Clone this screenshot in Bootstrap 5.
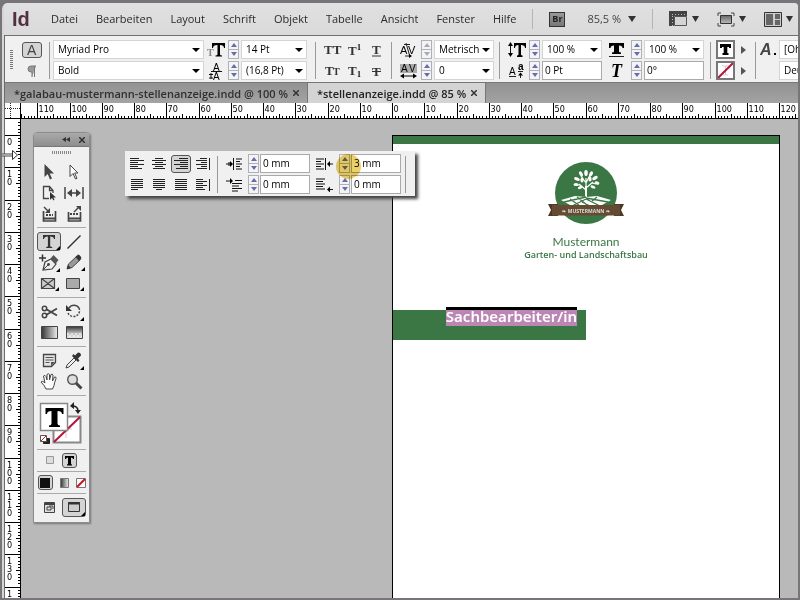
<!DOCTYPE html>
<html lang="de">
<head>
<meta charset="utf-8">
<meta name="viewport" content="width=device-width, initial-scale=1">
<title>stellenanzeige.indd</title>
<link href="https://cdn.jsdelivr.net/npm/bootstrap@5.3.0/dist/css/bootstrap.min.css" rel="stylesheet">
<style>
:root{--ui:"Open Sans","Noto Sans",sans-serif;--field:"Open Sans","Noto Sans",sans-serif}
html,body{height:100%}
body{font-family:var(--ui);font-size:11px;line-height:16px;color:#222;background:#77757a;overflow:hidden;padding:3px 2px 2px 2px}
svg{display:block;flex:none}
button{background:none;border:0;padding:0;color:inherit;display:flex;align-items:center;justify-content:center}
.app{background:#d6d6d6;border-radius:6px 4px 0 0;padding-left:2px;height:100%;overflow:hidden}
.menubar{background:linear-gradient(#e0e0e0,#dadada);height:32px;padding-left:8px;flex:none}
.menubar>*{flex:none}
.brand-id{font:bold 20px/24px "Liberation Sans",sans-serif;color:#52303f;width:39px}
.menubar a{color:#2a2a2a;text-decoration:none;white-space:nowrap}
.menus{gap:18px}
.bridge{width:16px;height:15px;background:linear-gradient(#999,#777);border:1px solid #333;font:bold 9px/12px var(--ui);color:#222}
.vline{width:1px;height:20px;background:#b4b4b4;flex:none;margin:0 16px}
.zoomgroup{margin-left:22px;gap:7px}
.views{gap:18px}
.zoomsel{appearance:none;border:0;background:none;font:11px/16px var(--ui);color:#444;padding:0}
.body-area{border-left:1px solid #6c6c6c;min-height:0}
.desk{min-height:0}
.control{display:grid;grid-auto-flow:column;grid-template-columns:13px 28px 7px 151px 24px 13px 66px 16px 19px 25px 19px 10px 25px 13px 60px 10px 25px 13px 60px 29px 13px 60px 12px 19px 17px 6px 21px 120px;grid-template-rows:21px 21px;align-items:center;background:#f0f0f0;border-top:1px solid #707070;border-bottom:1px solid #777;padding:3px 0 2px;height:48px;overflow:hidden;flex:none}
.control>*{justify-self:center}
.control>.fld,.control>.spin{justify-self:stretch}
.sepbar{grid-row:1/3;width:1px;height:37px;background:#999}
.grip-v{grid-row:1/3;width:3px;height:20px;background:repeating-linear-gradient(#777 0 1px,#f0f0f0 1px 2px)}
.fld{height:19px;border:1px solid #d4d4d4;border-radius:0;background-color:#fff;font:10px/16px var(--field);color:#000;padding:0 0 1px 4px;min-width:0;width:100%;outline:0}
select.fld{appearance:none;background-image:url("data:image/svg+xml,%3Csvg xmlns='http://www.w3.org/2000/svg' width='8' height='4'%3E%3Cpath d='M0 0h8L4 4z'/%3E%3C/svg%3E");background-repeat:no-repeat;background-position:right 3px center}
input.fld{border-color:#aaa;padding-left:2px}
.spin{display:flex;flex-direction:column;height:19px;margin-right:2px;border:1px solid #aeb1b8;background:#f4f4f6;color:#666da8}
.spin button{flex:1}
.spin button+button{border-top:1px solid #aeb1b8}
.spin.off{color:#aaa}
.inkbox{width:19px;height:19px;background:#fff;border:2px solid #777}
.pressed{background:#d4d4d4;border:1px solid #555;border-radius:3px}
.tabs{background:linear-gradient(#929292,#a3a3a3);height:20px;flex:none;font:600 11px/19px var(--ui);color:#303030}
.doc-tab{padding:0 8px 0 9px;gap:5px;white-space:nowrap;border-right:1px solid #777}
.doc-tab.current{background:#d4d4d4;color:#222}
.hruler{height:16px;background:#fff;border-bottom:1px solid #000;flex:none}
.vruler{width:16px;background:#fff;border-right:1px solid #000;flex:none;overflow:hidden}
.rule-text{font:9px "DejaVu Sans Condensed","DejaVu Sans",sans-serif;fill:#000}
.board{background:#b9b9b9;min-width:0;overflow:hidden}
.sheet{position:absolute;left:371px;top:16px;bottom:0;width:388px;background:#fff;border:1px solid #000;border-bottom:0;color:#3a7744}
.topband{height:8px;background:#3a7744}
.company{font:12px/15px Lato,sans-serif}
.trade{font:600 9px/12px "Open Sans",sans-serif}
.jobband{width:50%;height:30px;background:#3a7744;margin-top:49px}
.jobtext{background:#bb85b4;border-top:3px solid #000;color:#fff;font:600 15px/13px "Noto Sans",sans-serif;height:19px;margin:-3px 9px 0 0;white-space:nowrap}
.tools{position:absolute;left:12px;top:13px;width:57px;background:#f0f0f0;border:1px solid #8c8c8c;border-radius:4px 4px 0 0;box-shadow:1px 1px 2px #777;color:#444}
.tools header{height:14px;background:linear-gradient(#aaa,#8e8e8e);border-bottom:1px solid #777;gap:9px;padding-right:4px}
.grip-h{width:20px;height:3px;margin:4px auto 7px;background:repeating-linear-gradient(90deg,#888 0 1px,#f0f0f0 1px 2px)}
.tgrid{display:grid;grid-template-columns:25px 25px;grid-auto-rows:21px;justify-content:center}
.tools hr{margin:3px 3px;border:0;height:1px;background:#aaa;opacity:1}
.tgrid button{justify-self:center}
.tgrid .pressed{width:24px;height:19px;align-self:center}
.tools .mini{width:15px;height:15px}
.inks{height:15px}
.para{position:absolute;left:104px;top:32px;width:290px;height:45px;padding:2px 1px;background:#f0f0f0;box-shadow:3px 3px 3px #444;display:grid;grid-auto-flow:column;grid-template-columns:22px 22px 22px 22px 7px 27px 12px 50px 29px 12px 50px 8px;grid-template-rows:21px 21px;align-items:center}
.para>*{justify-self:center}
.para>.fld,.para>.spin{justify-self:stretch}
.para .spin{margin-right:1px}
.para .pressed{width:20px;height:18px}
.halo{position:absolute;left:315px;top:35px;width:25px;height:25px;border-radius:50%;background:#ecd06a;mix-blend-mode:multiply;pointer-events:none}
.pointer-mark{position:absolute;left:2px;top:149px}
</style>
<script src="https://cdn.jsdelivr.net/npm/bootstrap@5.3.0/dist/js/bootstrap.bundle.min.js"></script>
</head>
<body>
<svg width="0" height="0" class="position-absolute" aria-hidden="true">
<defs>
<symbol id="up" viewBox="0 0 6 4"><path d="M0 4h6L3 0z" fill="currentColor"/></symbol>
<symbol id="dn" viewBox="0 0 6 4"><path d="M0 0h6L3 4z" fill="currentColor"/></symbol>
<symbol id="corner" viewBox="0 0 4 4"><path d="M4 0v4H0z"/></symbol>
<linearGradient id="gr"><stop stop-color="#333"/><stop offset="1" stop-color="#eee"/></linearGradient>
<linearGradient id="gv" x2="0" y2="1"><stop stop-color="#666"/><stop offset="1" stop-color="#bbb"/></linearGradient>
<linearGradient id="gf" x2="0" y2="1"><stop stop-color="#333"/><stop offset=".55" stop-color="#bbb"/><stop offset="1" stop-color="#eee"/></linearGradient>
</defs>
</svg>
<div class="app d-flex flex-column">
<nav class="menubar d-flex align-items-center" aria-label="Hauptmenü">
<div class="brand-id">Id</div>
<div class="menus d-flex">
<a href="#">Datei</a><a href="#">Bearbeiten</a><a href="#">Layout</a><a href="#">Schrift</a><a href="#">Objekt</a><a href="#">Tabelle</a><a href="#">Ansicht</a><a href="#">Fenster</a><a href="#">Hilfe</a>
</div>
<div class="vline"></div>
<button class="bridge" aria-label="Bridge">Br</button>
<div class="zoomgroup d-flex align-items-center"><select class="zoomsel" aria-label="Zoomstufe"><option>85,5 %</option></select><svg width="8" height="6"><path d="M0 0h8L4 6z" fill="#333"/></svg></div>
<div class="vline"></div>
<div class="views d-flex">
<button class="gap-1" aria-label="Anzeigeoptionen"><svg width="19" height="16"><path d="M0 0h18v5H5v10H0z" fill="#444"/><path d="M3 3.500h15M3.500 5v10" stroke="#bbb" stroke-dasharray="1 2"/><path d="M5.500 5.500h12v9h-12z" fill="#d4d4d4" stroke="#555"/></svg><svg width="7" height="6"><path d="M0 0h7L3.500 6z" fill="#333"/></svg></button>
<button class="gap-1" aria-label="Bildschirmmodus"><svg width="18" height="15"><path d="M1 4V1h3M14 1h3v3M17 11v3h-3M4 14H1v-3" fill="none" stroke="#444"/><path d="M3.500 3.500h11v8h-11z" fill="url(#gv)" stroke="#333"/></svg><svg width="7" height="6"><path d="M0 0h7L3.500 6z" fill="#333"/></svg></button>
<button class="gap-1" aria-label="Dokumente anordnen"><svg width="18" height="15"><path d="M.5.5h17v14H.5z" fill="#ccc" stroke="#333"/><path d="M2 2h7v11H2zM11 2h5v5h-5zM11 8h5v5h-5z" fill="#666"/></svg><svg width="7" height="6"><path d="M0 0h7L3.500 6z" fill="#333"/></svg></button>
</div>
</nav>
<div class="body-area d-flex flex-column flex-fill">
<div class="control" id="control"></div>
<div class="tabs d-flex">
<div class="doc-tab d-flex align-items-center"><span>*galabau-mustermann-stellenanzeige.indd @ 100 %</span><button aria-label="Schließen"><svg width="6" height="6"><path d="M0 0l6 6M6 0L0 6" stroke="#333" stroke-width="1.500"/></svg></button></div>
<div class="doc-tab current d-flex align-items-center"><span>*stellenanzeige.indd @ 85 %</span><button aria-label="Schließen"><svg width="6" height="6"><path d="M0 0l6 6M6 0L0 6" stroke="#333" stroke-width="1.500"/></svg></button></div>
</div>
<div class="hruler"><svg id="hr" width="100%" height="15"></svg></div>
<div class="desk d-flex flex-fill position-relative">
<div class="vruler"><svg id="vr" width="15" height="100%"></svg></div>
<main class="board flex-fill position-relative">
<article class="sheet">
<div class="topband"></div>
<div class="text-center">
<svg class="mx-auto mt-3" width="78" height="66" viewBox="547 160 78 66">
<circle cx="586" cy="193" r="31" fill="#3a7744"/>
<g stroke="#fff" fill="none" stroke-width="1.200"><path d="M586 197V178M586 190l-7-6M586 188l7-6M586 183l-5-7M586 183l4-8M580 185l-4 0M592 183l4 1" /><path d="M586 198v-12" stroke-width="2"/></g>
<g fill="#fff"><ellipse cx="586" cy="173" rx="1.800" ry="3"/><ellipse cx="581" cy="174" rx="1.700" ry="2.800" transform="rotate(-30 581 174)"/><ellipse cx="591" cy="174" rx="1.700" ry="2.800" transform="rotate(30 591 174)"/><ellipse cx="577" cy="179" rx="3" ry="1.600" transform="rotate(20 577 179)"/><ellipse cx="595" cy="178" rx="3" ry="1.600" transform="rotate(-30 595 178)"/><ellipse cx="576" cy="184.500" rx="2.500" ry="1.500"/><ellipse cx="597" cy="183" rx="2.500" ry="1.600" transform="rotate(20 597 183)"/><ellipse cx="582" cy="180" rx="1.600" ry="2.500"/><ellipse cx="590" cy="179" rx="1.600" ry="2.500"/><ellipse cx="593" cy="187" rx="2.600" ry="1.500" transform="rotate(25 593 187)"/><ellipse cx="580" cy="187.500" rx="2.500" ry="1.400" transform="rotate(-25 580 187)"/></g>
<path d="M561 200l14-4 11 1 11-1 14 4-9 5h-32z" fill="#fff"/>
<path d="M586 197l-22 5M586 199l-14 7M586 198l22 4M586 199l14 7M577 197l10 8M570 199l10 7M582 202l10 5M597 197l-5 4" stroke="#3a7744" stroke-width="1.300"/>
<path d="M548 204l10 0v12h-10l3-6zM624 204h-10v12h10l-3-6z" fill="#4b3826"/><path d="M552 205h68v10.500h-68z" fill="#654b31"/>
<text x="586" y="212.500" text-anchor="middle" fill="#ddd" font-family="Open Sans, sans-serif" font-size="5" font-weight="bold">❧ MUSTERMANN ❧</text>
</svg>
<div class="company mt-2">Mustermann</div>
<div class="trade">Garten- und Landschaftsbau</div>
</div>
<div class="jobband d-flex justify-content-end align-items-start"><div class="jobtext">Sachbearbeiter/in</div></div>
</article>

<aside class="tools" aria-label="Werkzeuge">
<header class="d-flex align-items-center justify-content-end"><svg width="8" height="5"><path d="M4 0v5L0 2.500zM8 0v5L4 2.500z" fill="#333"/></svg><svg width="6" height="6"><path d="M0 0l6 6M6 0L0 6" stroke="#333" stroke-width="1.500"/></svg></header>
<div class="grip-h"></div>
<div class="tgrid">
<button aria-label="Auswahl"><svg width="12" height="16"><path d="M1.500 0v13l3.200-3 2.300 5.500 2-1-2.300-5H11z" fill="#444"/></svg></button>
<button aria-label="Direktauswahl"><svg width="12" height="16"><path d="M2 1v11.500l3-3 2.500 5.500 1.500-.7-2.400-5.300H10z" fill="#fff" stroke="#444"/></svg></button>
<button aria-label="Seite"><svg width="17" height="16"><path d="M8 13.500H2.500v-12h6l3.500 4V8M8.500 1.500v4H12" fill="none" stroke="#444" stroke-width="1.300"/><path d="M9 7v8l2-2 1.500 2.500 1-.7-1.200-2.300H15z" fill="#333"/></svg></button>
<button aria-label="Lücke"><svg width="20" height="14"><path d="M1 1v12M19 1v12M4 7h12" stroke="#444" stroke-width="1.500"/><path d="M3 7l5-4v8zM17 7l-5-4v8z" fill="#444"/></svg></button>
<button aria-label="Inhaltsaufnahme"><svg width="15" height="16"><path d="M1.500 5v10h12V5" fill="none" stroke="#444" stroke-width="1.700"/><path d="M2 12.500h11" stroke="#444" stroke-width="2"/><path d="M4 9h7" stroke="#444" stroke-width="2" stroke-dasharray="2 1"/><path d="M2 1l4 4" stroke="#444" stroke-width="1.500"/><path d="M8 2v5H3z" fill="#444"/></svg></button>
<button aria-label="Inhaltsplatzierung"><svg width="15" height="16"><path d="M1.500 6v9h12V6" fill="none" stroke="#444" stroke-width="1.700"/><path d="M2 12.500h11" stroke="#444" stroke-width="2"/><path d="M3 8h9" stroke="#444" stroke-width="2" stroke-dasharray="2 1"/><path d="M7 6l5-5" stroke="#444" stroke-width="1.500"/><path d="M9 0h5v5z" fill="#444"/></svg></button>
</div><hr>
<div class="tgrid">
<button class="pressed" aria-label="Text"><svg width="22" height="17"><path d="M5 2h12v4h-1q0-2.500-3.800-2.500v9.500q0 1 2 1v1h-6v-1q1.700 0 1.700-1V3.500Q6 3.500 6 6H5z" fill="#333"/><use href="#corner" x="18" y="13" width="4" height="4"/></svg></button>
<button aria-label="Linie"><svg width="16" height="16"><path d="M1.500 14.500l13-13" stroke="#333" stroke-width="1.400"/></svg></button>
<button aria-label="Zeichenstift"><svg width="22" height="19"><path d="M1 5h7M4.500 1.500v7" stroke="#333" stroke-width="1.500"/><path d="M5 17l2-8 6-3 5 5-4 5z" fill="#eee" stroke="#444" stroke-width="1.200"/><path d="M5 17l5-5" stroke="#444"/><circle cx="10.500" cy="11.500" r="1.400" fill="#444"/><path d="M12.500 5.500l3-3.500 5 5-3 4z" fill="#555"/><use href="#corner" x="18" y="15" width="4" height="4"/></svg></button>
<button aria-label="Buntstift"><svg width="21" height="19"><path d="M3 16l1.500-5L13 3l3.500 3.500L8 14.500z" fill="#999" stroke="#444"/><path d="M3 16l1-4 3 3zM11.500 4L14 1.500q2 0 3.500 3.500L15 8z" fill="#333"/><use href="#corner" x="17" y="14" width="4" height="4"/></svg></button>
<button aria-label="Rechteckrahmen"><svg width="20" height="15"><path d="M2.500 2.500h13v10h-13zl13 10m0-10l-13 10" fill="#ccc" stroke="#444" stroke-width="1.200"/><use href="#corner" x="16" y="11" width="4" height="4"/></svg></button>
<button aria-label="Rechteck"><svg width="20" height="15"><path d="M2.500 2.500h13v10h-13z" fill="#aaa" stroke="#444"/><use href="#corner" x="16" y="11" width="4" height="4"/></svg></button>
</div><hr>
<div class="tgrid">
<button aria-label="Schere"><svg width="17" height="14"><path d="M5 4l11 6.500M5 10l11-6.500" stroke="#444" stroke-width="1.800"/><circle cx="3.500" cy="3.500" r="2.200" fill="none" stroke="#444" stroke-width="1.500"/><circle cx="3.500" cy="10.500" r="2.200" fill="none" stroke="#444" stroke-width="1.500"/></svg></button>
<button aria-label="Frei transformieren"><svg width="20" height="18"><path d="M15 5a6 6 0 1 1-11 5" fill="none" stroke="#444" stroke-width="1.500" stroke-dasharray="2 1.300"/><path d="M2 2v6h6z" fill="#333"/><path d="M5 5a6 6 0 0 1 10 0" fill="none" stroke="#444" stroke-width="1.500"/><use href="#corner" x="16" y="14" width="4" height="4"/></svg></button>
<button aria-label="Verlaufsfarbfeld"><svg width="17" height="13"><path d="M.5.5h16v12H.5z" fill="url(#gr)" stroke="#444"/></svg></button>
<button aria-label="Weiche Verlaufskante"><svg width="17" height="13"><path d="M.5.5h16v12H.5z" fill="url(#gf)" stroke="#444"/><path d="M1 8h15M3 10h13" stroke="#fff" stroke-width="2" stroke-dasharray="2" opacity=".5"/></svg></button>
</div><hr>
<div class="tgrid">
<button aria-label="Notiz"><svg width="15" height="15"><path d="M1.500 1.500h12v8l-4 4h-8z" fill="#e4e4e4" stroke="#444" stroke-width="1.300"/><path d="M3.500 4.500h8M3.500 7h8M3.500 9.500h4" stroke="#555"/><path d="M13 9H9v4z" fill="#555"/></svg></button>
<button aria-label="Pipette"><svg width="20" height="18"><path d="M2 16l1-3 7-7 2 2-7 7z" fill="#eee" stroke="#444"/><path d="M8 4l6 6 1.500-1.500-1.500-2 3-3q0-3-3-3l-3 3L9.500 2z" fill="#333"/><use href="#corner" x="16" y="14" width="4" height="4"/></svg></button>
<button aria-label="Hand"><svg width="19" height="19"><path d="M6 17q-1-3-5-7 1.500-1.800 4 1L3.500 4q1.500-1.500 2.500.5L7 8V2.500q1.500-1.500 2.500 0V8l1.500-5.500q1.500-1 2 .5l-.5 6 2-4q2-.5 1.500 1.500-1.500 4-2 7l-1.500 3.500z" fill="#fff" stroke="#444"/></svg></button>
<button aria-label="Zoom"><svg width="17" height="17"><circle cx="6.500" cy="6.500" r="4.800" fill="#ddd" stroke="#555" stroke-width="1.400"/><path d="M10 10l5.500 5.500" stroke="#444" stroke-width="3"/></svg></button>
</div><hr>
<svg width="54" height="47" role="img" aria-label="Fläche und Kontur"><path d="M19.500 17.500h27v26h-27z" fill="#fff" stroke="#888" stroke-width="2"/><path d="M26 30h12m-6 0v9" stroke="#ccc" fill="none"/><path d="M20 43l26-25" stroke="#b8123a" stroke-width="2"/><path d="M6.500 4.500h27v27h-27z" fill="#fff" stroke="#888" stroke-width="1.500"/><path d="M11.500 9h18v6h-1.500q0-3-4.500-3v12.500q0 2 2.500 2V28h-11v-1.500q2.500 0 2.500-2V12q-4.500 0-4.500 3h-1.500z"/><path d="M38 7q6 0 6 5" fill="none" stroke="#222" stroke-width="1.500"/><path d="M40 3v7l-4-3zM41 11h6l-3 4z" fill="#222"/><path d="M9.500 39.500h6v5h-6z" fill="#222" stroke="#222"/><path d="M6.500 36.500h6v6h-6z" fill="#fff" stroke="#555"/><path d="M7 42l5-5" stroke="#c21"/></svg>
<hr>
<div class="d-flex justify-content-evenly px-1">
<button aria-label="Formatierung auf Container"><svg width="9" height="9"><path d="M.5.5h7v7h-7z" fill="#ddd" stroke="#999"/></svg></button>
<button class="pressed mini" aria-label="Formatierung auf Text"><svg width="11" height="10"><path d="M1 0h9v3H9q0-1.500-2-1.500v6q0 1 1 1V9.500H3V8.500q1 0 1-1v-6Q2 1.500 2 3H1z"/></svg></button>
</div><hr>
<div class="inks d-flex justify-content-around">
<button class="pressed mini" aria-label="Farbe anwenden"><svg width="10" height="10"><path d="M0 0h10v10H0z" fill="#111"/></svg></button>
<button aria-label="Verlauf anwenden"><svg width="9" height="10"><path d="M.5.5h8v9h-8z" fill="url(#gr)" stroke="#777"/></svg></button>
<button aria-label="Keine anwenden"><svg width="10" height="10"><path d="M.5.5h9v9h-9z" fill="#fff" stroke="#777"/><path d="M1 9l8-8" stroke="#d01020" stroke-width="2"/></svg></button>
</div><hr>
<div class="tgrid pb-1">
<button aria-label="Normal"><svg width="11" height="11"><path d="M.5.5h10v10H.5z" fill="#ddd" stroke="#444"/><path d="M1 2h9" stroke="#444" stroke-width="2"/><path d="M3 5h4v3H3zM5 4h4v3" fill="none" stroke="#444"/></svg></button>
<button class="pressed" aria-label="Vorschau"><svg width="22" height="17"><path d="M5.500 3.500h11v9h-11z" fill="#ccc" stroke="#333"/><path d="M5 4.500h12" stroke="#333" stroke-width="2"/><use href="#corner" x="18" y="13" width="4" height="4"/></svg></button>
</div>
</aside>

<section class="para" id="para" aria-label="Absatz"></section>
<div class="halo"></div>
</main>
</div>
</div>
</div>
<svg class="pointer-mark" width="17" height="12"><path d="M0 6h11" stroke="#444" stroke-width="3"/><path d="M0 6h11" stroke="#fff"/><path d="M10.500 1.500l5 4.500-5 4.500z" fill="#fff" stroke="#333"/></svg>
<script>
const spin=(name,off)=>`<div class="spin${off?' off':''}"><button aria-label="${name} erhöhen"><svg width="6" height="4"><use href="#up"/></svg></button><button aria-label="${name} verringern"><svg width="6" height="4"><use href="#dn"/></svg></button></div>`;
const sel=(name,v)=>`<select class="fld" aria-label="${name}"><option>${v}</option></select>`;
const inp=(name,v)=>`<input class="fld" aria-label="${name}" value="${v}">`;
const svg=(w,h,body)=>`<svg width="${w}" height="${h}">${body}</svg>`;
const btn=(name,icon,cls='')=>`<button class="${cls}" aria-label="${name}">${icon}</button>`;
const T=(x,y,s,t,extra='')=>`<text x="${x}" y="${y}" style="font:${s} 'Liberation Serif',serif" ${extra}>${t}</text>`;
const S=(x,y,s,t,extra='')=>`<text x="${x}" y="${y}" style="font:${s} 'Liberation Sans',sans-serif" ${extra}>${t}</text>`;
const sep='<div class="sepbar"></div>';
// column-wise list: each entry is [upper cell, lower cell] or a single full-height cell
const cols=[
 '<div class="grip-v"></div>',
 [btn('Zeichen',svg(18,14,S(4,12,'14px','A','fill="#444"')),'pressed'),btn('Absatz',svg(10,12,'<path d="M9 1H4a3 3 0 0 0 0 6h1v5M7.500 1v11" fill="#999" stroke="#777"/>'))],
 sep,
 [sel('Schriftart','Myriad Pro'),sel('Schriftschnitt','Bold')],
 [svg(18,17,T(0,15,'bold 10px','T','fill="#888"')+'<path d="M5 2h13v5h-1q0-3-4-3v9.500q0 1 2 1V15.500H8.500v-1q2 0 2-1V4Q6 4 6 7H5z"/>'),svg(14,18,S(4,9,'10px','A')+S(4,18,'10px','A')+'<path d="M2 9.500h11M2 11v6M0 12.500h4M0 16h4" stroke="#111"/>')],
 [spin('Schriftgrad'),spin('Zeilenabstand')],
 [sel('Schriftgrad','14 Pt'),sel('Zeilenabstand','(16,8 Pt)')],
 sep,
 [btn('Großbuchstaben',svg(18,14,T(0,11,'bold 13px','TT','fill="#333"'))),btn('Kapitälchen',svg(15,14,T(0,11,'bold 13px','T','fill="#333"')+T(8,11,'bold 10px','T','fill="#333"')))],
 [btn('Hochgestellt',svg(14,14,T(0,12,'bold 13px','T','fill="#333"')+T(9,7,'bold 8px','1'))),btn('Tiefgestellt',svg(14,14,T(0,11,'bold 13px','T','fill="#333"')+T(9,13,'bold 8px','1')))],
 [btn('Unterstrichen',svg(11,14,T(1,11,'bold 13px','T','fill="#333"')+'<path d="M1 13h9" stroke="#333"/>')),btn('Durchgestrichen',svg(11,14,T(1,12,'bold 13px','T','fill="#333"')+'<path d="M1 7.500h9" stroke="#333"/>'))],
 sep,
 [svg(17,16,S(0,12,'11px','A')+S(8,12,'11px','V')+'<path d="M6 1l4 14M4 2.500h6M5 14h5" stroke="#222" fill="none"/><path d="M9 12l3 2-3 2z"/>'),svg(18,16,'<path d="M0 1h17v9H0z" fill="#aaa"/>'+S(1,9,'10px','A')+S(9,9,'10px','V')+'<path d="M2 13h13" stroke="#000"/><path d="M0 13l4-2.500v5zM17 13l-4-2.500v5z"/>')],
 [spin('Kerning',1),spin('Laufweite')],
 [sel('Kerning','Metrisch'),sel('Laufweite','0')],
 sep,
 [svg(18,16,'<path d="M6 1h12v5h-1q0-3-4-3v9.500q0 1 1.500 1V15H9v-1.500q1.500 0 1.500-1V3Q7 3 7 6H6z"/><path d="M2.500 2v12" stroke="#111"/><path d="M0 4l2.500-4L5 4zM0 11l2.500 4L5 11z"/>'),svg(15,16,S(0,12,'10px','A')+S(9,7,'bold 10px','a')+'<path d="M0 13.500h7M9 8.500h5M11.500 10v5" stroke="#222"/><path d="M9 12.500l2.500-3 2.500 3z"/>')],
 [spin('Vertikal skalieren'),spin('Grundlinienversatz')],
 [sel('Vertikal skalieren','100 %'),inp('Grundlinienversatz','0 Pt')],
 [svg(17,16,'<path d="M1 1h15v5h-1.500q0-2.500-3.500-2.500v6q0 1 2 1V12H4v-1.500q2 0 2-1v-6Q2.500 3.500 2.500 6H1z"/><path d="M1 14.500h15" stroke="#222"/>'),svg(16,16,T(2,14,'italic bold 18px','T'))],
 [spin('Horizontal skalieren'),spin('Neigung')],
 [sel('Horizontal skalieren','100 %'),inp('Neigung','0°')],
 sep,
 [btn('Fläche',svg(13,13,'<path d="M1 1h11v4h-2V4H8.300v6h1.200v2h-6v-2h1.200V4H3v1H1z"/>'),'inkbox'),btn('Kontur',svg(15,15,'<path d="M4 3h7v3M7.500 3v9M5 12h5" fill="none" stroke="#ccc"/><path d="M0 15L15 0" stroke="#b8123a" stroke-width="2"/>'),'inkbox')],
 [btn('Flächenfarben',svg(5,8,'<path d="M0 0v8l5-4z" fill="#555"/>')),btn('Konturfarben',svg(5,8,'<path d="M0 0v8l5-4z" fill="#555"/>'))],
 sep,
 [svg(18,14,S(0,12,'italic bold 16px','A','fill="#444"')+'<path d="M14 10h2v2h-2z"/>'),'<span></span>'],
 [sel('Zeichenformat','[Ohne]'),sel('Sprache','Deutsch')]
];
const place=(list,id)=>{document.getElementById(id).innerHTML=list.flat().join('')};
place(cols,'control');

const lines=(xs,bar)=>svg(16,13,'<path d="'+xs.map(([a,b],i)=>`M${a} ${1.5+i*2}H${b}`).join('')+(bar!==undefined?`M${bar} 1v12`:'')+'" stroke="#222"/>');
const pcols=[
 [btn('Linksbündig',lines([[1,10],[1,15],[1,9],[1,15],[1,9],[1,13]])),btn('Blocksatz links',lines([[2,14],[2,14],[2,14],[2,14],[2,14],[2,9]]))],
 [btn('Zentriert',lines([[4,12],[1,15],[4,12],[1,15],[4,12],[2,14]])),btn('Blocksatz zentriert',lines([[2,14],[2,14],[2,14],[2,14],[2,14],[5,11]]))],
 [btn('Rechtsbündig',lines([[6,15],[1,15],[7,15],[1,15],[7,15],[3,15]]),'pressed'),btn('Blocksatz',lines([[2,14],[2,14],[2,14],[2,14],[2,14],[2,14]]))],
 [btn('Am Rücken',lines([[5,12],[1,12],[6,12],[1,12],[6,12],[2,12]],14.5)),btn('Nicht am Rücken',lines([[1,8],[1,12],[1,8],[1,12],[1,8],[1,10]],14.5))],
 sep,
 [svg(17,14,'<path d="M0 7h6M3 5v4M7.500 1v12M10 2h6M10 4.500h4M10 7h6M10 9.500h4M10 12h6" stroke="#111"/><path d="M4 4l3 3-3 3z"/>'),svg(17,14,'<path d="M0 3h6M9 2.500h7M6 5.500h10M6 8h7M6 10.500h10M6 13h6" stroke="#111"/><path d="M4 0l3 3-3 3z"/>')],
 [spin('Einzug links'),spin('Einzug erste Zeile')],
 [inp('Einzug links','0 mm'),inp('Einzug erste Zeile','0 mm')],
 [svg(17,14,'<path d="M0 2h8M0 4.500h5M0 7h8M0 9.500h5M0 12h8M9.500 1v12M12 7h5" stroke="#111"/><path d="M14 4l-3 3 3 3z"/>'),svg(17,14,'<path d="M0 1h9M0 3.500h7M0 6h9M0 8.500h7M0 11h9M12 11.500h5" stroke="#111"/><path d="M14 8.500l-3 3 3 3z"/>')],
 [spin('Einzug rechts'),spin('Einzug letzte Zeile')],
 [inp('Einzug rechts','3 mm'),inp('Einzug letzte Zeile','0 mm')],
 sep
];
place(pcols,'para');

// rulers in millimetres, origin at the sheet's upper left corner
const step=32.25,ox=387,oy=16;
let h='<path d="M0 5.500h16M5.500 0v15" stroke="#222" stroke-dasharray="1 1"/><path d="M15.500 0v15" stroke="#000"/>',d='';
const wide=document.getElementById('hr').clientWidth,tall=document.getElementById('vr').clientHeight;
for(let m=-115;ox+m*step/10<wide;m++){const x=Math.round(ox+m*step/10)+.5;if(x<16)continue;const a=Math.abs(m);d+=`M${x} ${a%10?(a%5?13:11):0}V15`;if(a%10===0)h+=`<text class="rule-text" x="${x+1}" y="9">${a}</text>`}
document.getElementById('hr').innerHTML=h+`<path d="${d}" stroke="#000"/>`;
let v='';d='';
for(let m=-4;oy+m*step/10<tall;m++){const y=Math.round(oy+m*step/10)+.5;d+=`M${m%10?(m%5?13:11):0} ${y}H15`;if(m%10===0)[...String(m)].forEach((c,i)=>{if(y+9+i*8<tall)v+=`<text class="rule-text" x="2" y="${y+9+i*8}">${c}</text>`})}
document.getElementById('vr').innerHTML=v+`<path d="${d}" stroke="#000"/>`;
</script>
</body>
</html>
